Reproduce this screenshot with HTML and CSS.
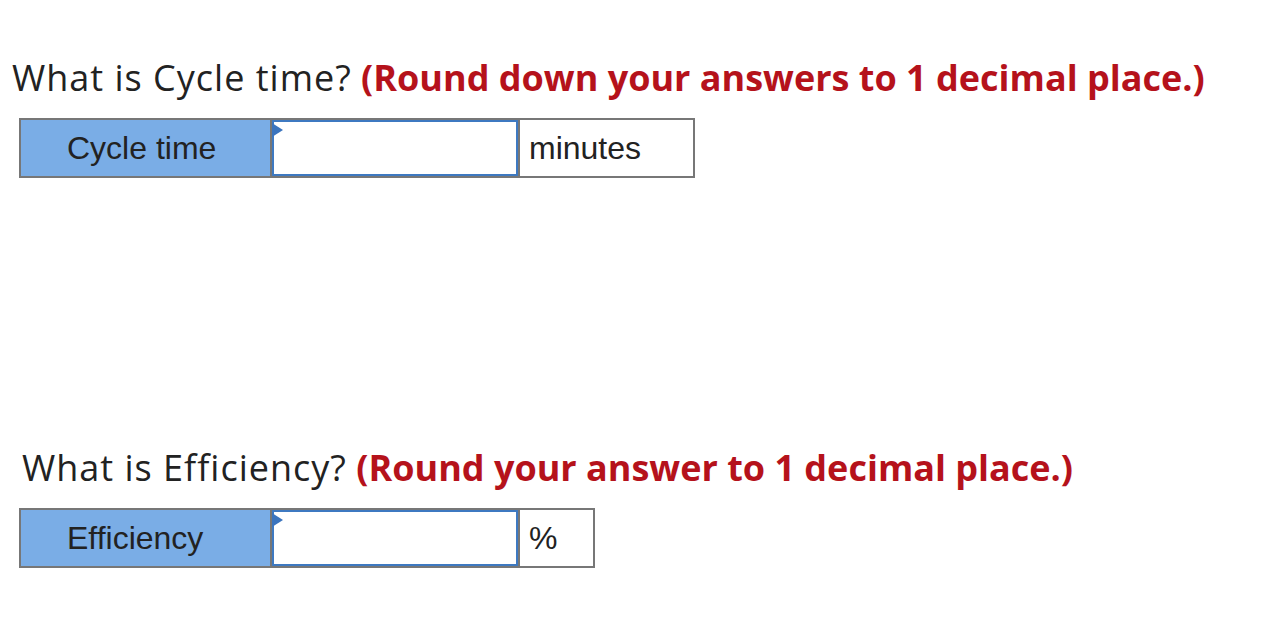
FILE: index.html
```html
<!DOCTYPE html>
<html>
<head>
<meta charset="utf-8">
<link rel="stylesheet" href="styles.css">
</head>
<body>
<div class="q q1">
  <p class="prompt"><span class="ask">What is Cycle time?</span> <strong class="hint">(Round down your answers to 1 decimal place.)</strong></p>
  <div class="row row-wide">
    <div class="label">Cycle time</div>
    <div class="field"><span class="flag"></span><input class="input" type="text"></div>
    <div class="unit">minutes</div>
  </div>
</div>
<div class="q q2">
  <p class="prompt"><span class="ask">What is Efficiency?</span> <strong class="hint">(Round your answer to 1 decimal place.)</strong></p>
  <div class="row row-narrow">
    <div class="label">Efficiency</div>
    <div class="field"><span class="flag"></span><input class="input" type="text"></div>
    <div class="unit">%</div>
  </div>
</div>
</body>
</html>
```
FILE: styles.css
```css
html, body { margin: 0; padding: 0; background: #fff; }
body { font-family: "Open Sans", sans-serif; color: #222; }
.q1 { padding-top: 56px; }
.q2 { padding-top: 268px; }
.prompt { margin: 0 0 18px 0; font-size: 36px; line-height: 44px; white-space: nowrap; }
.ask { letter-spacing: 1px; }
.q1 .prompt { padding-left: 12px; }
.q2 .prompt { padding-left: 22px; }
.hint { color: #b5121b; font-weight: 700; }
.row {
  margin-left: 19px;
  display: flex;
  height: 56px;
  border: 2px solid #777;
  font-family: "Liberation Sans", Arial, sans-serif;
  font-size: 32px;
}
.row-wide { width: 672px; }
.row-narrow { width: 572px; }
.label {
  width: 251px;
  flex: none;
  background: #7aade6;
  border-right: 2px solid #777;
  padding-left: 46px;
  box-sizing: border-box;
  display: flex;
  align-items: center;
  color: #222;
}
.field { position: relative; width: 246px; flex: none; border-right: 2px solid #777; }
.input {
  display: block;
  box-sizing: border-box;
  width: 100%;
  height: 100%;
  margin: 0;
  border: 2px solid #3e79c1;
  background: #fff;
  outline: none;
}
.flag {
  position: absolute;
  left: 0;
  top: 3px;
  width: 0; height: 0;
  border-top: 7px solid transparent;
  border-bottom: 7px solid transparent;
  border-left: 11px solid #3a74be;
}
.unit {
  flex: 1;
  display: flex;
  align-items: center;
  padding-left: 9px;
  color: #222;
}
```
